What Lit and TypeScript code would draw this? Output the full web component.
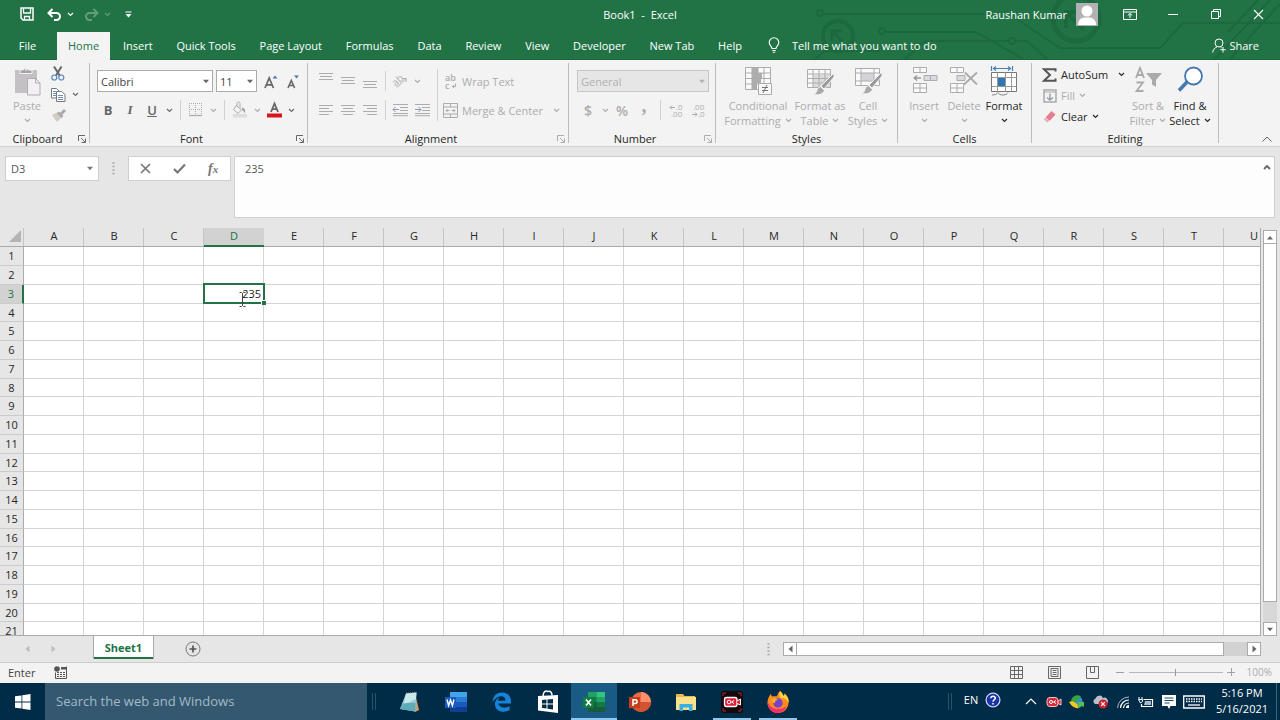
import { LitElement, html, svg, css, nothing, TemplateResult } from "lit";
import { customElement, state } from "lit/decorators.js";
import { classMap } from "lit/directives/class-map.js";

type Icon = TemplateResult;

const pic = (w: number, h: number, body: unknown): Icon =>
  html`<svg width=${w} height=${h} viewBox="0 0 ${w} ${h}" fill="none" stroke="currentColor" aria-hidden="true">${body}</svg>`;

const chevron = pic(7, 5, svg`<path d="M1 1l2.500 2.500L6 1" stroke-width="1.100"/>`);
const arrowDown = pic(8, 5, svg`<path d="M1 .8h6L4 4.300z" fill="currentColor" stroke="none"/>`);
const launcherIcon = pic(8, 8, svg`<path d="M.5 6V.5H7M3 3l4 4M7.500 3.500v4h-4" />`);
const dots = pic(3, 13, svg`<path d="M.5 1h2M.5 4.500h2M.5 8h2M.5 11.500h2" stroke-width="1.500"/>`);

const icons = {
  save: pic(14, 14, svg`<path d="M1 1h12v12H3l-2-2z" stroke-width="1.500"/><path d="M3.500 1v5h7V1M4.500 13V9.500h5V13" stroke-width="1.300"/>`),
  undo: pic(15, 13, svg`<path d="M5.500 1L1.500 5l4 4M2 5h7.500a3.500 3.500 0 010 7H7" stroke-width="2"/>`),
  redo: pic(15, 13, svg`<path d="M9.500 1l4 4-4 4M13 5H5.500a3.500 3.500 0 000 7H8" stroke-width="2"/>`),
  customize: pic(7, 7, svg`<path d="M.5 1h6"/><path d="M.5 3h6l-3 3.500z" fill="currentColor" stroke="none"/>`),
  ribbonMode: pic(14, 11, svg`<path d="M.5 .5h13v10H.5zM.5 3h13M7 9V4.500M4.800 6.500L7 4.500l2.200 2"/>`),
  minimize: pic(10, 3, svg`<path d="M0 1.500h10"/>`),
  restore: pic(10, 10, svg`<path d="M.5 2.500h7v7h-7zM2.500 2.500v-2h7v7h-2"/>`),
  close: pic(11, 11, svg`<path d="M1 1l9 9M10 1l-9 9" stroke-width="1.100"/>`),
  bulb: pic(12, 16, svg`<path d="M4 11.500C4 9.500 1.200 8.500 1.200 5.500a4.800 4.800 0 019.600 0C10.800 8.500 8 9.500 8 11.500zM4.200 13.500h3.600M4.800 15.300h2.400" stroke-width="1.100"/>`),
  share: pic(14, 15, svg`<circle cx="7" cy="5" r="4"/><path d="M.7 14.500c.3-3 2-4.500 4.300-5.700M8.500 9l1 .6M11 9v5.500M8.300 11.700h5.400"/>`),
  paste: pic(28, 30, svg`<path d="M2 4h22v9h-8v14H2z" fill="#c3c1c3" stroke="none"/><path d="M7 4h3a3 3 0 015.500 0H19v3.500H7z" fill="#a5a3a5" stroke="#f3f3f3"/><circle cx="13" cy="3.800" r="1" fill="#f3f3f3" stroke="none"/><path d="M14.500 12.500h8l4.500 4.500v12H14.500z" fill="#f3f0f3" stroke="#b0adb0"/><path d="M22.500 12.500V17H27" stroke="#b0adb0"/>`),
  cut: pic(14, 15, svg`<path d="M3 .5l6 9.500M10.500 .5L4.700 10" stroke="#666" stroke-width="2"/><circle cx="3.300" cy="11.500" r="2.500" stroke="#5b87c0" stroke-width="1.200"/><circle cx="10.300" cy="11.500" r="2.500" stroke="#5b87c0" stroke-width="1.200"/>`),
  copy: pic(15, 14, svg`<path d="M.5 .5h5l2.500 2.500v7H.5z" fill="#fff" stroke="#777"/><path d="M2 3.500h3M2 5.500h3M2 7.500h3" stroke="#6a8fbf"/><path d="M5.500 3.500h5l3.500 3v7H5.500z" fill="#fff" stroke="#777"/><path d="M7 7.500h5M7 9.500h5M7 11.500h5" stroke="#6a8fbf"/>`),
  painter: pic(15, 13, svg`<path d="M1 6l6-3 4 5-5 5z" fill="#d2ccc4" stroke="none"/><path d="M7 3.500l4.500 4.500" stroke="#aaa" stroke-width="2.500"/><path d="M10 5l4-4" stroke="#aaa" stroke-width="3"/>`),
  grow: pic(14, 15, svg`<path d="M1 14L5.200 4l4.200 10M2.600 10.800h5.300" stroke-width="1.700"/><path d="M8.500 4.500h5L11 1.500z" fill="#4a7ab5" stroke="none"/>`),
  shrink: pic(14, 15, svg`<path d="M2 14l3.300-7.500L8.600 14M3.400 11.500h4" stroke-width="1.600"/><path d="M8 1.500h5L10.500 4.500z" fill="#4a7ab5" stroke="none"/>`),
  borders: pic(14, 14, svg`<path d="M.5 0v12M6.500 0v12M12.500 0v12M0 .5h13M0 6.500h13" stroke-dasharray="1 1"/><path d="M0 12.500h13" stroke-width="1.300"/>`),
  bucket: pic(16, 16, svg`<path d="M4.500 3.500L9.500 8 6 11.500 1.500 7.500zM5 5V1.500a1.500 1.500 0 013 0V6" stroke="#aaa"/><path d="M10 5.500c3 1 3.500 3 3 5.500-1-1-1.500-2.500-3-3z" fill="#999" stroke="none"/><path d="M1 12h14v3.500H1z" fill="#dedcdc" stroke="none"/>`),
  fontColor: pic(15, 16, svg`<path d="M4 10L7.500 1.500 11 10M5.200 7.200h4.600" stroke="#666" stroke-width="1.800"/><path d="M0 11.500h15v4H0z" fill="#d9141c" stroke="none"/>`),
  orient: pic(16, 16, svg`<text x="1" y="11" font-size="10" transform="rotate(-42 6 9)" fill="currentColor" stroke="none">ab</text><path d="M5 14.500L14 5.500M14 9V5.500h-3.500"/>`),
  wrap: pic(12, 17, svg`<text x="0" y="8" font-size="9" font-weight="600" fill="currentColor" stroke="none">ab</text><text x="0" y="16" font-size="9" font-weight="600" fill="currentColor" stroke="none">c</text><path d="M10.500 10.500v3H7.500M9 12l-1.700 1.500L9 15"/>`),
  merge: pic(15, 15, svg`<path d="M.5 .5h14v14H.5zM.5 4h14M.5 11h14M7.500 .5V4M7.500 11v3.500M3 7.500h3.500M8.500 7.500H12M4.500 6L3 7.500 4.500 9M10.500 6L12 7.500 10.500 9"/>`),
  outdent: pic(15, 12, svg`<path d="M0 .5h15M7 3.500h8M7 6.500h8M0 9.500h15M0 11.700h15"/><path d="M0 5.500h6M2.500 3L0 5.500 2.500 8" stroke="#8b9db0"/>`),
  indent: pic(15, 12, svg`<path d="M0 .5h15M7 3.500h8M7 6.500h8M0 9.500h15M0 11.700h15"/><path d="M0 5.500h6M3.500 3L6 5.500 3.500 8" stroke="#8b9db0"/>`),
  incDec: pic(15, 13, svg`<text x="7" y="6" font-size="8" fill="currentColor" stroke="none">.0</text><text x="2" y="13" font-size="8" fill="currentColor" stroke="none">.00</text><path d="M1 3.500h5M3 1.500l-2 2 2 2"/>`),
  decDec: pic(15, 13, svg`<text x="2" y="6" font-size="8" fill="currentColor" stroke="none">.00</text><text x="7" y="13" font-size="8" fill="currentColor" stroke="none">.0</text><path d="M1 10.500h5M4 8.500l2 2-2 2"/>`),
  conditional: pic(30, 30, svg`<path d="M2.500 1.500h25v22h-25z" fill="#fbfafb"/><path d="M9 2h6v5H9zM9 12h9v5H9zM9 7h10v5H9zM9 17h5v6H9z" fill="#aeacae" stroke="none"/><path d="M2.500 7h25M2.500 12.500h25M2.500 18h25M9 1.500v22M21 1.500v22M15 1.500V7"/><path d="M15.500 17.500h13v11h-13z" fill="#f8f7f8"/><path d="M19 21.500h6M19 24.500h6M24 19l-4 8" stroke="#777"/>`),
  formatTable: pic(30, 30, svg`<path d="M2.500 3.500h23v18h-23z" fill="#fbfafb"/><path d="M8 9h17v12H8z" fill="#dcd9dc" stroke="none"/><path d="M2.500 8h23M2.500 12.500h23M2.500 17h23M8 3.500v18M14 3.500v18M20 3.500v18"/><path d="M29 7v4L19 23l-3-3z" fill="#999" stroke="#f3f3f3"/><path d="M15.500 20.500l4 4c-2 4-6 5-11 4 3-1 3-3 4-6z" fill="#aaa8aa" stroke="#f3f3f3"/>`),
  cellStyles: pic(30, 30, svg`<path d="M2.500 2.500h24v17h-24z" fill="#fbfafb"/><path d="M8 7h13v8H8z" fill="#d5d3da" stroke="none"/><path d="M2.500 7h24M2.500 15h24M8 2.500v17M21 2.500v17"/><path d="M29 6v4L19 22l-3-3z" fill="#999" stroke="#f3f3f3"/><path d="M15.500 19.500l4 4c-2 4-6 5-11 4 3-1 3-3 4-6z" fill="#aaa8aa" stroke="#f3f3f3"/>`),
  insertCells: pic(28, 30, svg`<path d="M3.500 1.500h13v5h-13zM10 1.500v5M3.500 17.500h13v9h-13zM10 17.500v9M3.500 22h13" fill="#fafafa"/><path d="M14 9.500h13v5H14zM20.500 9.500v5" fill="#dcd8e2"/><path d="M4 12h7M7 9.500L4.200 12 7 14.500" stroke="#999" stroke-width="1.400"/>`),
  deleteCells: pic(28, 30, svg`<path d="M.5 1.500h13v5H.5zM7 1.500v5M.5 17.500h13v9H.5zM7 17.500v9M.5 22h13" fill="#fafafa"/><path d="M7 9.500h8v5H7z" fill="#dcd8e2"/><path d="M15 6.500l12 12M27 6.500L14 18.500" stroke="#aaa" stroke-width="1.800"/>`),
  formatCells: pic(28, 30, svg`<path d="M1.500 0v5M22.500 0v5M3 2.500h18M6 .5L3.500 2.500 6 4.500M18 .5l2.500 2L18 4.500" stroke="#4a7fb5" stroke-width="1.200"/><path d="M1.500 6.500h25v19h-25z" fill="#fff" stroke="#777"/><path d="M1.500 11.500h25M1.500 20.500h25M7.500 6.500v19M15.500 6.500v19M21.500 6.500v19" stroke="#999"/><path d="M8 12h7v8H8z" fill="#2f75b5" stroke="none"/><path d="M2 29c3 0 5-1 6-2.500 1 1.500 2 2.500 5 2.500s4-1 5-2.500" stroke="#888"/>`),
  sum: pic(15, 14, svg`<path d="M13.500 3.500V1.200H2L8 7l-6 5.800h11.500v-2.300" stroke="#555" stroke-width="2"/>`),
  fill: pic(14, 14, svg`<path d="M1 1h12v12H1z" stroke="#aaa" stroke-width="1.500"/><path d="M1 3h12" stroke="#aaa"/><path d="M7 4.500V11M4 8.500L7 11l3-2.500" stroke="#8d9db0" stroke-width="1.400"/>`),
  eraser: pic(14, 13, svg`<path d="M8.500 1l4 3.500L6.500 11l-4-3.500z" fill="#e27d92" stroke="none"/><path d="M2 8l4 3.500-1.500 1L1 9.500z" fill="#e9a5b3" stroke="none"/>`),
  sort: pic(28, 28, svg`<path d="M2 12L6 2l4 10M3.500 9h5" stroke="#aaa" stroke-width="1.900"/><path d="M2.500 16.500H9L2.500 25H9.500" stroke="#aaa" stroke-width="1.800"/><path d="M12 7h16l-6 7v7l-4-2.500V14z" fill="#aaa" stroke="none"/>`),
  find: pic(28, 28, svg`<path d="M11 16L3 24.500" stroke="#4678b0" stroke-width="3.500"/><circle cx="17.500" cy="10" r="8.500" fill="#fff" stroke="#4678b0" stroke-width="1.800"/>`),
  collapse: pic(10, 6, svg`<path d="M.5 5.500L5 1l4.500 4.500" stroke="#666"/>`),
  cancel: pic(11, 11, svg`<path d="M1 1l9 9M10 1L1 10" stroke="#777" stroke-width="1.700"/>`),
  check: pic(13, 11, svg`<path d="M1 6l3.500 3.500L12 1.500" stroke="#777" stroke-width="2.200"/>`),
  calc: pic(13, 13, svg`<circle cx="3" cy="3" r="2.800" fill="#555" stroke="none"/><path d="M7 1h6v2.500H7z" fill="#555" stroke="none"/><path d="M1.500 6.500v6h11v-12" stroke="#555"/><path d="M3 6.500h8M3 8.500h8M3 10.500h8" stroke="#555" stroke-dasharray="2 1"/>`),
  plusCircle: pic(16, 16, svg`<circle cx="8" cy="8" r="7" stroke="#777"/><path d="M8 4.500v7M4.500 8h7" stroke="#555" stroke-width="1.700"/>`),
  viewNormal: pic(13, 13, svg`<path d="M.5 .5h12v12H.5zM.5 4.500h12M.5 8.500h12M4.500 .5v12M8.500 .5v12"/>`),
  viewPage: pic(13, 13, svg`<path d="M.5 .5h12v12H.5zM3 2.500h7v8H3zM4.500 4.500h4M4.500 6.500h4M4.500 8.500h4"/>`),
  viewBreak: pic(13, 13, svg`<path d="M.5 .5h12v12H.5zM4.500 .5v6h4M8.500 .5v6"/>`),
  windows: pic(16, 16, svg`<path d="M0 2.300L6.500 1.400V7.600H0zM7.300 1.300L15.500 0v7.600H7.300zM0 8.400h6.500v6.200L0 13.700zM7.300 8.400h8.200V16l-8.200-1.200z" fill="#fff" stroke="none"/>`),
  notepad: pic(22, 22, svg`<path d="M16 2l4 17-4 2-2-3z" fill="#c9a070" stroke="none"/><path d="M7 2.500L17.500 1.500 16 20.500 1 18z" fill="#9bd0d8" stroke="none"/><path d="M7 2.500l10.500-1L17 8 5 13z" fill="#c9e9ec" stroke="none"/><path d="M1 18l3-5.500 12.500-1L16 20.500z" fill="#5fabb9" stroke="none"/><path d="M7 2l10-.8" stroke="#777" stroke-dasharray="1 1"/>`),
  word: pic(24, 22, svg`<path d="M6 1h17v5H6z" fill="#41a5ee" stroke="none"/><path d="M6 6h17v5H6z" fill="#2b7cd3" stroke="none"/><path d="M6 11h17v5H6z" fill="#185abd" stroke="none"/><path d="M6 16h17v5H6z" fill="#103f91" stroke="none"/><path d="M1 6h11v11H1z" fill="#185abd" stroke="none"/><path d="M3 8.500L4.600 14.500 6.500 9l1.900 5.500L10 8.500" stroke="#fff" stroke-width="1.400"/>`),
  edge: pic(22, 22, svg`<path d="M1.500 11C2 4.500 6 1.500 11 1.500c6 0 9 4 9 9v2H7.500c.3 4 6.500 5.500 11 2.800v4C11.500 22.500 3.500 20 4 12.500c.2-3 2-5 4.500-6-1 1-1.300 2-1.300 3.200h7.300c0-6-8-6-13 1.300z" fill="#1683d8" stroke="none"/>`),
  store: pic(22, 24, svg`<path d="M6 6.500C6 1 9 .5 10.500 1.500 14 .5 15 3 15 5.500" stroke="#fff" stroke-width="1.500"/><path d="M1 6l20-1v18L1 20.500z" fill="#fff" stroke="none"/><path d="M5 10l4.500-.4v4H5zM10.500 9.500L16 9v4.600h-5.500zM5 14.600h4.500v4L5 18zM10.500 14.600H16v4.900l-5.500-.7z" fill="#002c47" stroke="none"/>`),
  excel: pic(24, 22, svg`<path d="M6 1h8.500v5H6z" fill="#21a366" stroke="none"/><path d="M14.500 1H23v5h-8.500z" fill="#33c481" stroke="none"/><path d="M6 6h8.500v5H6z" fill="#107c41" stroke="none"/><path d="M14.500 6H23v5h-8.500z" fill="#21a366" stroke="none"/><path d="M6 11h8.500v10H6z" fill="#185c37" stroke="none"/><path d="M14.500 11H23v5h-8.500z" fill="#107c41" stroke="none"/><path d="M14.500 16H23v5h-8.500z" fill="#185c37" stroke="none"/><path d="M1 6h11v11H1z" fill="#107c41" stroke="none"/><path d="M4 8.500l5 6M9 8.500l-5 6" stroke="#fff" stroke-width="1.600"/>`),
  powerpoint: pic(24, 22, svg`<circle cx="13" cy="11" r="10" fill="#ed6c47" stroke="none"/><path d="M13 1a10 10 0 0110 10H13z" fill="#ff8f6b" stroke="none"/><path d="M3 11h20a10 10 0 01-20 0z" fill="#d35230" stroke="none"/><path d="M1 6h11v11H1z" fill="#c43e1c" stroke="none"/><path d="M5 15V8.700h2.200a1.800 1.800 0 010 3.700H5" stroke="#fff" stroke-width="1.500"/>`),
  explorer: pic(22, 20, svg`<path d="M1 2h7l1.500 2H20v4H1z" fill="#e8b84a" stroke="none"/><path d="M1 5h20v13H1z" fill="#fbe08d" stroke="none"/><path d="M4.500 19v-7h13v7h-3.500v-3.500H8V19z" fill="#37b0e2" stroke="none"/>`),
  recorder: pic(24, 24, svg`<rect x="1" y="1" width="22" height="22" rx="3" fill="#15090d" stroke="none"/><path d="M3 6V3h3M18 3h3v3M3 18v3h3M18 21h3v-3" stroke="#b02838"/><rect x="4.500" y="7.500" width="12.500" height="9" rx="2" fill="#e0203a" stroke="#fff" stroke-width="1.300"/><path d="M17 11l3.500-2v6L17 13.500" fill="#e0203a" stroke="#fff"/><circle cx="9" cy="12" r="1.800" stroke="#fff"/><path d="M14 10.500L11.500 12l2.500 1.500" stroke="#fff"/>`),
  firefox: pic(24, 24, svg`<path d="M14 1c2 2 3 3 3.500 5 1-.5 1-1.500 1-2.500C22 6.500 23 9.500 22.500 13 22 19 17.500 23 12 23S1.500 18.500 1.500 12.500C1.500 9 3 6 5 3.500c0 1.500.5 2.500 1.500 3C8 6 9.500 6 10.500 6.500 12 5 11.500 3 14 1z" fill="#ff8a1e" stroke="none"/><path d="M14 1c2 2 3 3 3.500 5 1-.5 1-1.500 1-2.500C22 6.500 23 9.500 22.500 13 21 9 18 8 15 8c-2-1-2-4-1-7z" fill="#ffd33a" stroke="none"/><path d="M1.500 11c1.500 5 5 8 10 8 4 0 7-1 9-3-1.500 4.500-5 7-9 7C5 23 1 17.500 1.500 11z" fill="#f5306a" stroke="none"/><circle cx="12" cy="13" r="4.700" fill="#7443c9" stroke="none"/><path d="M5 9c3-2 5-1 7 1-2 0-3 1-3 3-3 0-4-2-4-4z" fill="#ffa52e" stroke="none"/>`),
  help: pic(16, 16, svg`<circle cx="8" cy="8" r="6.900" fill="#1a34a8" stroke="#c9d3f0" stroke-width="1.300"/><path d="M5.800 6.300C6 3.500 10.500 3.700 10.300 6.300 10 8 8 7.800 8 9.700M8 11v1.500" stroke="#fff" stroke-width="1.500"/>`),
  up: pic(12, 7, svg`<path d="M1 6l5-5 5 5" stroke="#fff" stroke-width="1.200"/>`),
  trayRec: pic(16, 12, svg`<rect x="1" y="1.500" width="11" height="9" rx="3" fill="#d8293b" stroke="#f4c5c9"/><path d="M12 5l3-2v6l-3-1.500z" fill="#d8293b" stroke="#f4c5c9"/><circle cx="5" cy="6" r="1.500" stroke="#fff"/><path d="M10 4.500L7.500 6 10 7.500" stroke="#fff"/>`),
  idm: pic(16, 14, svg`<circle cx="8" cy="6.500" r="5.500" fill="#3a8ad8" stroke="none"/><path d="M2 5C4 0 10-1 12 2L8 6 4 8z" fill="#3ba23f" stroke="none"/><path d="M0 7c3-2 6 0 10 4l-1 2.500C5 12.500 2 11 0 7z" fill="#f2c81d" stroke="none"/><path d="M8 7h7v5l-2-1-3 2-2-2 2-2z" fill="#55c04c" stroke="none"/>`),
  cloud: pic(16, 15, svg`<path d="M3 10a3 3 0 01.5-5.500A4 4 0 0111 4a3 3 0 013 6z" fill="#b9c2cb" stroke="none"/><circle cx="11" cy="10" r="4.500" fill="#d3222e" stroke="none"/><path d="M9.200 8.200l3.600 3.600M12.800 8.200l-3.600 3.600" stroke="#fff" stroke-width="1.200"/>`),
  wifi: pic(14, 14, svg`<path d="M1.500 13A11.500 11.500 0 0113 2" stroke="#aab9c5"/><path d="M4.500 13A8.500 8.500 0 0113 5M7.500 13A5.500 5.500 0 0113 8" stroke="#fff" stroke-width="1.200"/><path d="M10 13a3 3 0 013-3v3z" fill="#fff" stroke="none"/>`),
  battery: pic(16, 12, svg`<path d="M5.500 3.500h9v7h-11V8" stroke="#fff" stroke-width="1.200"/><path d="M7 5h6v4H6z" fill="#a9b8c4" stroke="none"/><path d="M1 1v2M4 1v2M.5 3.500h4v2L2.500 7z" stroke="#fff"/>`),
  note: pic(16, 16, svg`<path d="M1 1h14v11H9.500L8 15l-1.500-3H1z" fill="#fff" stroke="none"/><path d="M3.500 4h9M3.500 6.500h9M3.500 9h5" stroke="#1c4560"/>`),
  keyboard: pic(22, 14, svg`<path d="M.7 1h20.600v12H.7z" stroke="#fff" stroke-width="1.300"/><path d="M3 4h16M3 6.500h16" stroke="#fff" stroke-width="1.300" stroke-dasharray="1.500 1"/><path d="M5 10h12" stroke="#fff" stroke-width="1.300"/>`),
};

const lines = (rows: number[], widths: number[], align: "l" | "c" | "r") =>
  pic(14, 20, rows.map((y, i) => {
    const w = widths[i % widths.length];
    const x = align === "l" ? 0 : align === "r" ? 14 - w : (14 - w) / 2;
    return svg`<path d="M${x} ${y}.5h${w}"/>`;
  }));

const TABS = ["Home", "Insert", "Quick Tools", "Page Layout", "Formulas", "Data", "Review", "View", "Developer", "New Tab", "Help"];
const COLUMNS = "ABCDEFGHIJKLMNOPQRSTU".split("");
const ROWS = Array.from({ length: 21 }, (_, i) => i + 1);

@customElement("app-root")
export class AppRoot extends LitElement {
  @state() private tab = "Home";
  @state() private cell = { column: "D", row: 3 };
  @state() private value = "235";

  static styles = css`
    :host { display: flex; flex-direction: column; height: 100vh; overflow: hidden; background: #e6e6e6; color: #262626; font: 11px/15px "Open Sans", "Noto Sans", sans-serif; }
    * { box-sizing: border-box; }
    button, input, select { font: inherit; color: inherit; margin: 0; padding: 0; border: 0; background: none; border-radius: 0; outline: 0; }
    button { display: flex; align-items: center; justify-content: center; white-space: nowrap; }
    svg { display: block; flex: none; overflow: visible; }

    .top { position: relative; flex: none; background: #217346; color: #fff; border-bottom: 1px solid #1b6339; height: 60px; }
    .circuit { position: absolute; right: 0; top: 0; color: #1c683f; overflow: hidden; }
    .title-bar { position: relative; display: grid; grid-template-columns: 1fr auto 1fr; align-items: center; height: 32px; padding-bottom: 4px; }
    .quick { display: flex; align-items: center; padding-left: 16px; }
    .quick button { width: 22px; height: 22px; }
    .quick .drop { width: 10px; color: #fff; }
    .quick .space { margin-left: 5px; }
    .faded { opacity: 0.3; }
    .book { white-space: pre; }
    .account { display: flex; align-items: center; justify-content: flex-end; }
    .avatar { margin: 0 10px 0 9px; }
    .account button { width: 43px; height: 28px; }
    .tabs { position: relative; display: flex; height: 28px; align-items: stretch; }
    .tabs button { padding: 0 11px 2px; }
    .tab-list { display: flex; justify-content: space-between; flex: 0 1 696px; }
    .tabs .file { width: 57px; padding: 0 2px 2px 0; }
    .tabs .on { background: #f3f3f3; color: #217346; height: 28px; }
    .tabs .tell { gap: 12px; padding-left: 15px; }
    .tabs .share { margin-left: auto; padding: 0 21px 2px 0; gap: 3px; }

    .ribbon { flex: none; display: flex; height: 87px; background: #f3f3f3; border-bottom: 1px solid #d2d2d2; }
    .group { position: relative; flex: none; display: flex; flex-direction: column; border-right: 1px solid transparent; border-image: linear-gradient(#f3f3f3 4px, #bdbdbd 4px, #bdbdbd 82px, #f3f3f3 82px) 1; }
    .clipboard { width: 90px; }
    .font { width: 218px; }
    .alignment { width: 261px; }
    .number { width: 147px; }
    .styles { width: 182px; }
    .cells { width: 134px; }
    .editing { width: 187px; }
    .body { display: flex; height: 71px; padding: 0 7px; }
    .styles .body, .cells .body { padding: 0 6px; }
    .number .body, .editing .body { padding: 0 6px 0 8px; }
    .caption { display: flex; align-items: center; height: 15px; }
    .caption span { flex: 1; text-align: center; }
    .caption button { width: 14px; height: 15px; color: #666; }
    .off, .caption .off { color: #adabad; }
    .rows { display: flex; flex-direction: column; gap: 7px; padding-top: 10px; }
    .row { display: flex; height: 22px; align-items: center; }
    .tool { width: 22px; height: 22px; font-size: 13px; }
    .font .tool, .drop { color: #666; }
    .font .off, .off.drop { color: #adabad; }
    .drop { width: 12px; height: 22px; }
    .sep { width: 8px; height: 20px; background: linear-gradient(#d0d0d0, #d0d0d0) center / 1px 100% no-repeat; }
    .sep.wide { width: 10px; }
    .sep.tall { height: 52px; margin-top: 9px; }
    .bold { font-weight: 700; }
    .money { font-size: 14px; font-weight: 600; }
    .comma { font: 700 20px/10px "Liberation Serif", serif; padding-bottom: 10px; }
    .italic { font: italic 700 13px "Liberation Serif", serif; }
    .under { font-weight: 600; text-decoration: underline; }
    .combo { display: grid; align-items: center; height: 22px; border: 1px solid #ababab; background: #fff; color: #444; }
    .combo > * { grid-area: 1 / 1; }
    .combo select { appearance: none; width: 100%; height: 20px; padding-left: 3px; opacity: 1; }
    .combo svg { justify-self: end; margin-right: 2px; pointer-events: none; color: #666; }
    .combo.off, .combo.off svg { background: #e6e6e6; border-color: #c6c6c6; color: #b2b0b2; }
    .family { width: 116px; }
    .size { width: 41px; margin: 0 3px; }
    .format { width: 132px; }
    .text-tool { height: 22px; justify-content: flex-start; gap: 2px; }
    .text-tool .lead { display: flex; justify-content: center; width: 19px; }
    .text-tool .near { margin-left: 2px; }
    .text-tool .tail { margin-left: 8px; }
    .big { flex-direction: column; justify-content: flex-start; height: 71px; padding-top: 6px; line-height: 15px; }
    .big .pic { display: flex; height: 32px; align-items: flex-start; }
    .big .line { display: flex; align-items: center; gap: 4px; height: 15px; }
    .w72 { width: 72px; } .w52 { width: 52px; } .w44 { width: 44px; } .w40 { width: 40px; }
    .stack { display: flex; flex-direction: column; padding-top: 3px; }
    .stack .row, .stack .text-tool { height: 21px; }
    .editing .stack { width: 88px; padding-top: 4px; }
    .editing .stack .text-tool { color: #262626; }
    .editing .stack .off { color: #adabad; }
    .collapse { margin: auto 7px 2px auto; width: 12px; height: 10px; }

    .formula { flex: none; display: flex; align-items: flex-start; height: 81px; padding: 9px 5px 10px 5px; }
    .name { display: grid; align-items: center; width: 94px; height: 25px; border: 1px solid #cfcfcf; background: #fff; color: #555; }
    .name > * { grid-area: 1 / 1; }
    .name input { width: 100%; height: 23px; padding-left: 5px; }
    .name svg { justify-self: end; margin-right: 4px; color: #777; }
    .grip { display: flex; align-items: center; justify-content: center; width: 29px; height: 25px; color: #a5a5a5; }
    .entry { display: flex; width: 103px; height: 25px; border: 1px solid #cfcfcf; background: #fff; }
    .entry button { flex: 1; }
    .fx { font: italic 700 14px "Liberation Serif", serif; color: #777; }
    .fx sub { font-size: 11px; vertical-align: baseline; }
    .value { flex: 1; display: flex; align-items: flex-start; margin-left: 3px; height: 62px; border: 1px solid #cfcfcf; background: #fdfdfd; color: #555; }
    .value input { flex: 1; min-width: 0; height: 23px; padding-left: 10px; }
    .value button { width: 14px; height: 20px; }

    .work { flex: 1; min-height: 0; display: flex; }
    .sheet { flex: 1; min-width: 0; overflow: hidden; border-right: 1px solid #ababab; border-bottom: 1px solid #ababab; }
    table { table-layout: fixed; width: 1284px; border-collapse: separate; border-spacing: 0; background: #fff; }
    th { font-weight: 400; background: #e6e6e6; padding: 0; text-align: center; border: 0 solid #ababab; line-height: 15px; }
    td { padding: 0; border: 0 solid #d4d4d4; border-width: 0 1px 1px 0; }
    thead th { height: 19px; padding-bottom: 2px; line-height: 14px; border-width: 0 0 1px; background: linear-gradient(#c4c4c4, #c4c4c4) right / 1px 100% no-repeat #e6e6e6; }
    thead .corner { width: 24px; }
    .corner svg { margin-left: 9px; color: #b4b4b4; }
    tbody tr { height: 19px; }
    tbody tr:nth-child(4n) { height: 18px; }
    tbody th { border-width: 0 1px 1px 0; border-bottom-color: #cbcbcb; line-height: 14px; }
    thead .picked { background: #d2d2d2; color: #217346; border-bottom: 2px solid #217346; padding-bottom: 1px; }
    tbody .picked { background: #d2d2d2; color: #217346; border-right: 2px solid #217346; }
    .active { position: relative; }
    .editor { position: absolute; inset: -2px -2px -1px -1px; border: 2px solid #217346; background: #fff; }
    .editor input { display: block; width: 100%; height: 100%; text-align: right; padding-right: 2px; color: #222; }
    .handle { position: absolute; right: -3px; bottom: -3px; width: 5px; height: 5px; background: #217346; border: 1px solid #fff; border-width: 1px 0 0 1px; }
    .beam { position: absolute; left: 34px; top: 7px; color: #444; }

    .vscroll { display: flex; flex-direction: column; width: 14px; margin: 2px 3px 0 2px; background: #d8d8d8; }
    .vscroll button, .hscroll button { flex: none; background: #fff; border: 1px solid #ababab; color: #666; width: 14px; height: 14px; }
    .vthumb { flex: 1; margin-bottom: 20px; background: #fff; border: 1px solid #ababab; border-top: 0; }

    .sheets { flex: none; display: flex; height: 26px; align-items: center; }
    .sheets .nav { width: 26px; height: 24px; color: #bdbdbd; }
    .sheets .first { margin-left: 14px; }
    .sheets .tab { align-self: flex-start; width: 61px; height: 23px; margin-left: 27px; background: #fff; border: solid #ababab; border-width: 0 1px; color: #217346; font-weight: 700; box-shadow: inset 0 -2px #217346; }
    .sheets .add { margin-left: 31px; width: 16px; height: 24px; }
    .sheets .grip { margin-left: auto; width: 30px; }
    .hscroll { display: flex; width: 478px; height: 14px; background: #d2d2d2; margin-right: 19px; }
    .hthumb { flex: 1; margin-right: 23px; background: #fff; border: 1px solid #ababab; border-left: 0; }

    .status { flex: none; display: flex; align-items: center; height: 21px; padding: 0 8px 2px; background: #f3f3f3; border-top: 1px solid #cdcdcd; color: #444; }
    .status .macro { margin-left: 19px; width: 13px; height: 18px; }
    .views { display: flex; gap: 25px; margin-left: auto; color: #666; }
    .views button { width: 13px; height: 18px; }
    .zoom { display: flex; align-items: center; margin: 0 11px 0 17px; gap: 4px; color: #a0a0a0; }
    .zoom button { width: 9px; height: 18px; }
    .zoom input { appearance: none; width: 94px; height: 11px; background: linear-gradient(#b8b8b8, #b8b8b8) center / 100% 1px no-repeat; }
    .zoom input::-webkit-slider-thumb { appearance: none; width: 1px; height: 7px; background: #999; }
    .percent { color: #ababab; font-size: 10px; }

    .taskbar { flex: none; display: flex; align-items: stretch; height: 37px; background: #002c47; color: #fff; }
    .start { width: 45px; }
    .search { flex: 0 1 322px; min-width: 120px; background: #33586f; display: flex; }
    .search input { flex: 1; min-width: 0; padding-left: 11px; font-size: 13px; }
    .search input::placeholder { color: #a3bac7; opacity: 1; }
    .bars { align-self: center; width: 4px; height: 17px; border: solid #2c526a; border-width: 0 1px; margin-left: 5px; }
    .apps { display: flex; gap: 8px; margin-left: 15px; }
    .apps button { width: 38px; }
    .apps .current { width: 46px; margin: 0 -4px; background: #1a5b86; }
    .apps .open { box-shadow: inset 0 -2px #8fc8ee; }
    .tray { display: flex; align-items: center; margin-left: auto; }
    .tray button { width: 23px; height: 37px; }
    .tray .lang, .tray .round { padding-bottom: 4px; }
    .tray .lang { width: 16px; margin-left: 11px; }
    .tray .round { margin-left: 2px; }
    .tray .more { margin-left: 15px; }
    .tray .keys { width: 28px; }
    .clock { display: flex; flex-direction: column; align-items: center; width: 68px; line-height: 16px; padding-bottom: 2px; }
    .edge-line { align-self: stretch; width: 4px; border-left: 1px solid #40657c; }
  `;

  private drop(name: string, off = false) {
    return html`<button class=${classMap({ drop: true, off })} aria-label=${name}>${chevron}</button>`;
  }

  private tool(name: string, icon: unknown, off = false, extra = "") {
    return html`<button class="tool ${off ? "off" : ""} ${extra}" aria-label=${name}>${icon}</button>`;
  }

  private big(width: string, icon: Icon, first: string, second: string, off = true) {
    return html`<button class="big ${width} ${off ? "off" : ""}">
      <span class="pic">${icon}</span><span class="line">${first}</span><span class="line">${second}${chevron}</span>
    </button>`;
  }

  private textTool(icon: Icon, label: string, off: boolean, drop = "") {
    return html`<button class="text-tool ${off ? "off" : ""}">
      <span class="lead">${icon}</span>${label}${drop ? html`<span class=${drop}>${chevron}</span>` : nothing}
    </button>`;
  }

  private group(name: string, title: string, body: unknown, launcher: "" | "on" | "off" = "") {
    return html`<section class="group ${name}">
      <div class="body">${body}</div>
      <div class="caption"><span>${title}</span>${launcher
        ? html`<button class=${launcher} aria-label="${title} settings">${launcherIcon}</button>` : nothing}</div>
    </section>`;
  }

  private renderTop() {
    return html`<header class="top">
      <svg class="circuit" width="480" height="59" viewBox="800 0 480 59" fill="none" stroke="currentColor" stroke-width="2" aria-hidden="true">
        <circle cx="820" cy="13" r="3"/><path d="M823 14h162"/>
        <circle cx="838" cy="36" r="15" stroke-width="4"/><path d="M832 41V31h10M832 31l11 11" stroke-width="3"/>
        <circle cx="882" cy="31" r="3"/><path d="M885 32h91l47 27M815 59l10-8h55M905 59l20-18h83"/>
        <circle cx="1012" cy="41" r="3"/><path d="M1015 41h12l20 18M1015 18l45 30h100l23-25h97"/>
        <circle cx="1076" cy="18" r="23" stroke-width="5"/><path d="M1066 28V12h16M1066 12l18 18" stroke-width="4"/>
        <path d="M1270 0l-55 59M1280 4l-50 55M1258 0l-30 32"/>
      </svg>
      <div class="title-bar">
        <div class="quick">
          <button aria-label="Save">${icons.save}</button>
          <button class="space" aria-label="Undo">${icons.undo}</button><button class="drop" aria-label="Undo list">${chevron}</button>
          <button class="space faded" aria-label="Redo">${icons.redo}</button><button class="drop faded" aria-label="Redo list">${chevron}</button>
          <button class="space" aria-label="Customize">${icons.customize}</button>
        </div>
        <div class="book">Book1  -  Excel</div>
        <div class="account">
          <span>Raushan Kumar</span>
          <svg class="avatar" width="22" height="23" viewBox="0 0 22 23" aria-hidden="true"><path d="M0 0h22v23H0z" fill="#b3b1b3"/><circle cx="11" cy="8" r="5.500" fill="#fff"/><path d="M2 22c0-5 3-7 6-7.500h6c3 .5 6 2.500 6 7.500z" fill="#fff"/></svg>
          <button aria-label="Ribbon display">${icons.ribbonMode}</button>
          <button aria-label="Minimize">${icons.minimize}</button>
          <button aria-label="Restore">${icons.restore}</button>
          <button aria-label="Close">${icons.close}</button>
        </div>
      </div>
      <nav class="tabs">
        <button class="file">File</button>
        <div class="tab-list">${TABS.map((t) => html`<button class=${classMap({ on: t === this.tab })} @click=${() => (this.tab = t)}>${t}</button>`)}</div>
        <button class="tell">${icons.bulb}<span>Tell me what you want to do</span></button>
        <button class="share">${icons.share}<span>Share</span></button>
      </nav>
    </header>`;
  }

  private renderRibbon() {
    return html`<div class="ribbon">
      ${this.group("clipboard", "Clipboard", html`
        <button class="big w40 off"><span class="pic">${icons.paste}</span><span class="line">Paste</span><span class="line">${chevron}</span></button>
        <div class="stack">
          <div class="row">${this.tool("Cut", icons.cut)}</div>
          <div class="row">${this.tool("Copy", icons.copy)}${this.drop("Copy options")}</div>
          <div class="row">${this.tool("Format painter", icons.painter, true)}</div>
        </div>`, "on")}
      ${this.group("font", "Font", html`<div class="rows">
        <div class="row">
          <div class="combo family"><select aria-label="Font family"><option>Calibri</option></select>${arrowDown}</div>
          <div class="combo size"><select aria-label="Font size"><option>11</option></select>${arrowDown}</div>
          ${this.tool("Increase size", icons.grow)}${this.tool("Decrease size", icons.shrink)}
        </div>
        <div class="row">
          ${this.tool("Bold", "B", false, "bold")}${this.tool("Italic", "I", false, "italic")}${this.tool("Underline", "U", false, "under")}${this.drop("Underline style")}
          <i class="sep wide"></i>${this.tool("Borders", icons.borders, true)}${this.drop("Border list", true)}
          <i class="sep wide"></i>${this.tool("Fill colour", icons.bucket, true)}${this.drop("Fill list", true)}
          ${this.tool("Font colour", icons.fontColor)}${this.drop("Colour list")}
        </div></div>`, "on")}
      ${this.group("alignment", "Alignment", html`
        <div class="rows">
          <div class="row">
            ${this.tool("Top", lines([2, 5, 8], [14, 12, 14], "c"), true)}${this.tool("Middle", lines([6, 9, 12], [14, 12, 14], "c"), true)}${this.tool("Bottom", lines([10, 13, 16], [14, 12, 14], "c"), true)}
            <i class="sep"></i>${this.tool("Orientation", icons.orient, true)}${this.drop("Orientation list", true)}
          </div>
          <div class="row">
            ${this.tool("Left", lines([5, 8, 11, 14], [14, 10], "l"), true)}${this.tool("Center", lines([5, 8, 11, 14], [14, 10], "c"), true)}${this.tool("Right", lines([5, 8, 11, 14], [14, 10], "r"), true)}
            <i class="sep"></i>${this.tool("Outdent", icons.outdent, true)}${this.tool("Indent", icons.indent, true)}
          </div>
        </div>
        <i class="sep tall"></i>
        <div class="rows">
          ${this.textTool(icons.wrap, "Wrap Text", true)}
          ${this.textTool(icons.merge, "Merge & Center", true, "tail")}
        </div>`, "off")}
      ${this.group("number", "Number", html`<div class="rows">
        <div class="combo format off"><select aria-label="Number format"><option>General</option></select>${arrowDown}</div>
        <div class="row">
          ${this.tool("Currency", "$", true, "money")}${this.drop("Currency list", true)}${this.tool("Percent", "%", true, "money")}${this.tool("Comma", ",", true, "comma")}
          <i class="sep wide"></i>${this.tool("Increase decimal", icons.incDec, true)}${this.tool("Decrease decimal", icons.decDec, true)}
        </div></div>`, "off")}
      ${this.group("styles", "Styles", html`
        ${this.big("w72", icons.conditional, "Conditional", "Formatting")}
        ${this.big("w52", icons.formatTable, "Format as", "Table")}
        ${this.big("w44", icons.cellStyles, "Cell", "Styles")}`)}
      ${this.group("cells", "Cells", html`
        ${this.big("w40", icons.insertCells, "Insert", "")}
        ${this.big("w40", icons.deleteCells, "Delete", "")}
        ${this.big("w40", icons.formatCells, "Format", "", false)}`)}
      ${this.group("editing", "Editing", html`
        <div class="stack">
          ${this.textTool(icons.sum, "AutoSum", false, "tail")}
          ${this.textTool(icons.fill, "Fill", true, "near")}
          ${this.textTool(icons.eraser, "Clear", false, "near")}
        </div>
        ${this.big("w40", icons.sort, "Sort &", "Filter")}
        ${this.big("w44", icons.find, "Find &", "Select", false)}`)}
      <button class="collapse" aria-label="Collapse ribbon">${icons.collapse}</button>
    </div>`;
  }

  private renderFormula() {
    return html`<div class="formula">
      <div class="name"><input aria-label="Name box" .value=${this.cell.column + this.cell.row} />${arrowDown}</div>
      <div class="grip">${dots}</div>
      <div class="entry">
        <button aria-label="Cancel">${icons.cancel}</button>
        <button aria-label="Enter">${icons.check}</button>
        <button aria-label="Insert function"><span class="fx">f<sub>x</sub></span></button>
      </div>
      <div class="value">
        <input aria-label="Formula" .value=${this.value} @input=${this.edit} />
        <button aria-label="Collapse formula bar">${pic(8, 6, svg`<path d="M1 5l3-3 3 3" stroke="#666" stroke-width="1.800"/>`)}</button>
      </div>
    </div>`;
  }

  private edit(e: Event) {
    this.value = (e.target as HTMLInputElement).value;
  }

  private renderCell(column: string, row: number) {
    if (column !== this.cell.column || row !== this.cell.row) {
      return html`<td @click=${() => (this.cell = { column, row })}></td>`;
    }
    return html`<td class="active"><div class="editor">
      <input aria-label="Cell ${column}${row}" .value=${this.value} @input=${this.edit} />
      <i class="handle"></i>
      <svg class="beam" width="7" height="15" viewBox="0 0 7 15" fill="none" stroke="currentColor" aria-hidden="true"><path d="M.5 .5h2l1 1 1-1h2M3.500 1.500v12M.5 14.500h2l1-1 1 1h2"/></svg>
    </div></td>`;
  }

  private renderSheet() {
    return html`<main class="work">
      <div class="sheet"><table>
        <thead><tr><th class="corner">${pic(12, 12, svg`<path d="M12 0v12H0z" fill="currentColor" stroke="none"/>`)}</th>
          ${COLUMNS.map((c) => html`<th class=${classMap({ picked: c === this.cell.column })}>${c}</th>`)}</tr></thead>
        <tbody>${ROWS.map((r) => html`<tr><th class=${classMap({ picked: r === this.cell.row })}>${r}</th>${COLUMNS.map((c) => this.renderCell(c, r))}</tr>`)}</tbody>
      </table></div>
      <div class="vscroll">
        <button aria-label="Scroll up">${pic(8, 5, svg`<path d="M1 4.500h6L4 1z" fill="currentColor" stroke="none"/>`)}</button>
        <div class="vthumb"></div>
        <button aria-label="Scroll down">${arrowDown}</button>
      </div>
    </main>`;
  }

  private renderFooter() {
    const left = pic(5, 8, svg`<path d="M4.500 .5v7L.5 4z" fill="currentColor" stroke="none"/>`);
    const right = pic(5, 8, svg`<path d="M.5 .5v7L4.500 4z" fill="currentColor" stroke="none"/>`);
    return html`<div class="sheets">
        <button class="nav first" aria-label="Previous sheet">${left}</button>
        <button class="nav" aria-label="Next sheet">${right}</button>
        <button class="tab">Sheet1</button>
        <button class="add" aria-label="New sheet">${icons.plusCircle}</button>
        <div class="grip">${dots}</div>
        <div class="hscroll">
          <button aria-label="Scroll left">${left}</button><div class="hthumb"></div><button aria-label="Scroll right">${right}</button>
        </div>
      </div>
      <div class="status">
        <span>Enter</span><button class="macro" aria-label="Record macro">${icons.calc}</button>
        <div class="views">
          <button aria-label="Normal view">${icons.viewNormal}</button>
          <button aria-label="Page layout view">${icons.viewPage}</button>
          <button aria-label="Page break view">${icons.viewBreak}</button>
        </div>
        <div class="zoom">
          <button aria-label="Zoom out">${pic(8, 8, svg`<path d="M0 4.500h8"/>`)}</button>
          <input type="range" aria-label="Zoom" min="0" max="100" value="50" />
          <button aria-label="Zoom in">${pic(8, 8, svg`<path d="M0 4.500h8M4.500 0v8"/>`)}</button>
        </div>
        <span class="percent">100%</span>
      </div>`;
  }

  private renderTaskbar() {
    const apps: [string, Icon, string][] = [
      ["Notepad", icons.notepad, ""], ["Word", icons.word, ""], ["Edge", icons.edge, ""], ["Store", icons.store, ""],
      ["Excel", icons.excel, "current open"], ["PowerPoint", icons.powerpoint, ""], ["Explorer", icons.explorer, ""],
      ["Recorder", icons.recorder, "open"], ["Firefox", icons.firefox, "open"],
    ];
    const tray: [string, Icon, string][] = [
      ["More", icons.up, "more"], ["Recorder", icons.trayRec, ""], ["Downloads", icons.idm, ""], ["Cloud", icons.cloud, ""],
      ["Network", icons.wifi, ""], ["Battery", icons.battery, ""], ["Notifications", icons.note, ""], ["Keyboard", icons.keyboard, "keys"],
    ];
    return html`<footer class="taskbar">
      <button class="start" aria-label="Start">${icons.windows}</button>
      <div class="search"><input aria-label="Search" placeholder="Search the web and Windows" /></div>
      <i class="bars"></i>
      <div class="apps">${apps.map(([n, i, c]) => html`<button class=${c} aria-label=${n}>${i}</button>`)}</div>
      <div class="tray">
        <i class="bars"></i>
        <button class="lang">EN</button><button class="round" aria-label="Help">${icons.help}</button>
        ${tray.map(([n, i, c]) => html`<button class=${c} aria-label=${n}>${i}</button>`)}
        <div class="clock"><span>5:16 PM</span><span>5/16/2021</span></div>
        <i class="edge-line"></i>
      </div>
    </footer>`;
  }

  render() {
    return html`${this.renderTop()}${this.renderRibbon()}${this.renderFormula()}${this.renderSheet()}${this.renderFooter()}${this.renderTaskbar()}`;
  }
}
